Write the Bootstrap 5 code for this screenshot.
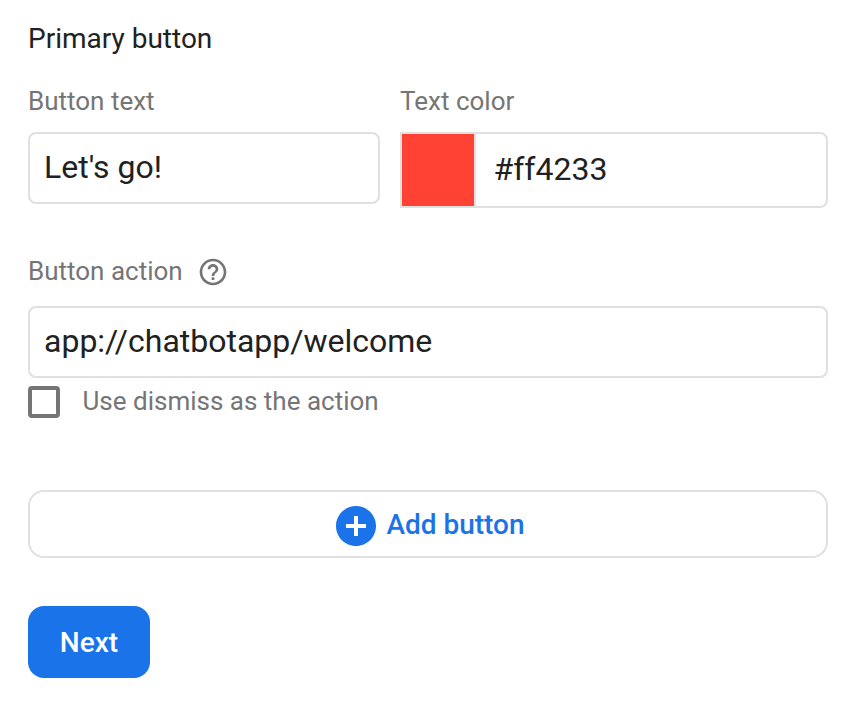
<!DOCTYPE html>
<html lang="en">
<head>
<meta charset="utf-8">
<title>Primary button</title>
<meta name="viewport" content="width=device-width, initial-scale=1">
<link href="https://cdn.jsdelivr.net/npm/bootstrap@5.3.0/dist/css/bootstrap.min.css" rel="stylesheet">
<style>
body{font-family:Roboto,sans-serif;color:#212121;background:#fff}
.editor{padding:21px 38px 0 28px}
.section-title{font-size:28px;line-height:36px;font-weight:400;margin:0 0 27px}
.field-label{font-size:26px;line-height:34px;color:#757575;margin:0}
.pair .field-label{display:block;margin-bottom:14px}
.pair{gap:20px}
.form-control{font-family:inherit;font-size:32px;line-height:40px;color:#212121;border:2px solid #e0e0e0;border-radius:8px;padding:0 14px 2px;height:72px}
.text-col{width:352px}
.color-box{height:76px;border:2px solid #e0e0e0;border-radius:0 8px 8px 0}
.swatch{width:74px;background:#ff4233;border-right:2px solid #e0e0e0}
.color-box .form-control{border:0;padding:0 17.5px 2px}
.action-head{margin:47px 0 17px;height:34px;gap:14px}
.action-head .field-label,.dismiss .field-label{margin-bottom:2px}
.help-icon{width:32px;height:32px;fill:#757575}
.dismiss{margin-top:8px;height:32px;gap:22.5px}
.form-check-input.check-square{width:32px;height:32px;border:4px solid #757575;border-radius:4px;margin:0}
.add-btn{height:68px;border:2px solid #e0e0e0;border-radius:16px;color:#1a73e8;font-size:28px;font-weight:500;margin-top:72px;padding:0;gap:7px}
.add-btn span{margin-top:2px}
.add-icon{width:48px;height:48px;fill:#1a73e8;margin:4px -.5px 0 .5px}
.next-btn{width:122px;height:72px;border-radius:16px;background:#1a73e8;color:#fff;font-size:28px;font-weight:500;margin-top:48px;padding-top:8px}
</style>
</head>
<body>
<main class="editor">
  <h1 class="section-title">Primary button</h1>
  <div class="pair d-flex">
    <div class="text-col flex-shrink-0">
      <label class="field-label" for="t">Button text</label>
      <input id="t" class="form-control" value="Let's go!">
    </div>
    <div class="flex-grow-1">
      <label class="field-label" for="c">Text color</label>
      <div class="color-box d-flex">
        <span class="swatch flex-shrink-0"></span>
        <input id="c" class="form-control" value="#ff4233">
      </div>
    </div>
  </div>
  <div class="action-head d-flex align-items-center">
    <label class="field-label" for="a">Button action</label>
    <svg class="help-icon" viewBox="0 0 24 24" aria-hidden="true"><path d="M11 18h2v-2h-2v2zm1-16C6.480 2 2 6.480 2 12s4.480 10 10 10 10-4.480 10-10S17.520 2 12 2zm0 18c-4.410 0-8-3.590-8-8s3.590-8 8-8 8 3.590 8 8-3.590 8-8 8zm0-14c-2.210 0-4 1.790-4 4h2c0-1.100.9-2 2-2s2 .9 2 2c0 2-3 1.750-3 5h2c0-2.250 3-2.500 3-5 0-2.210-1.790-4-4-4z"/></svg>
  </div>
  <input id="a" class="form-control" value="app://chatbotapp/welcome">
  <div class="dismiss d-flex align-items-center">
    <input id="d" type="checkbox" class="form-check-input check-square">
    <label class="field-label" for="d">Use dismiss as the action</label>
  </div>
  <button class="btn add-btn w-100 d-flex align-items-center justify-content-center" type="button">
    <svg class="add-icon" viewBox="0 0 24 24" aria-hidden="true"><path d="M12 2C6.480 2 2 6.480 2 12s4.480 10 10 10 10-4.480 10-10S17.520 2 12 2zm5 11h-4v4h-2v-4H7v-2h4V7h2v4h4v2z"/></svg>
    <span>Add button</span>
  </button>
  <button class="btn next-btn" type="button">Next</button>
</main>
<script src="https://cdn.jsdelivr.net/npm/bootstrap@5.3.0/dist/js/bootstrap.bundle.min.js"></script>
</body>
</html>
